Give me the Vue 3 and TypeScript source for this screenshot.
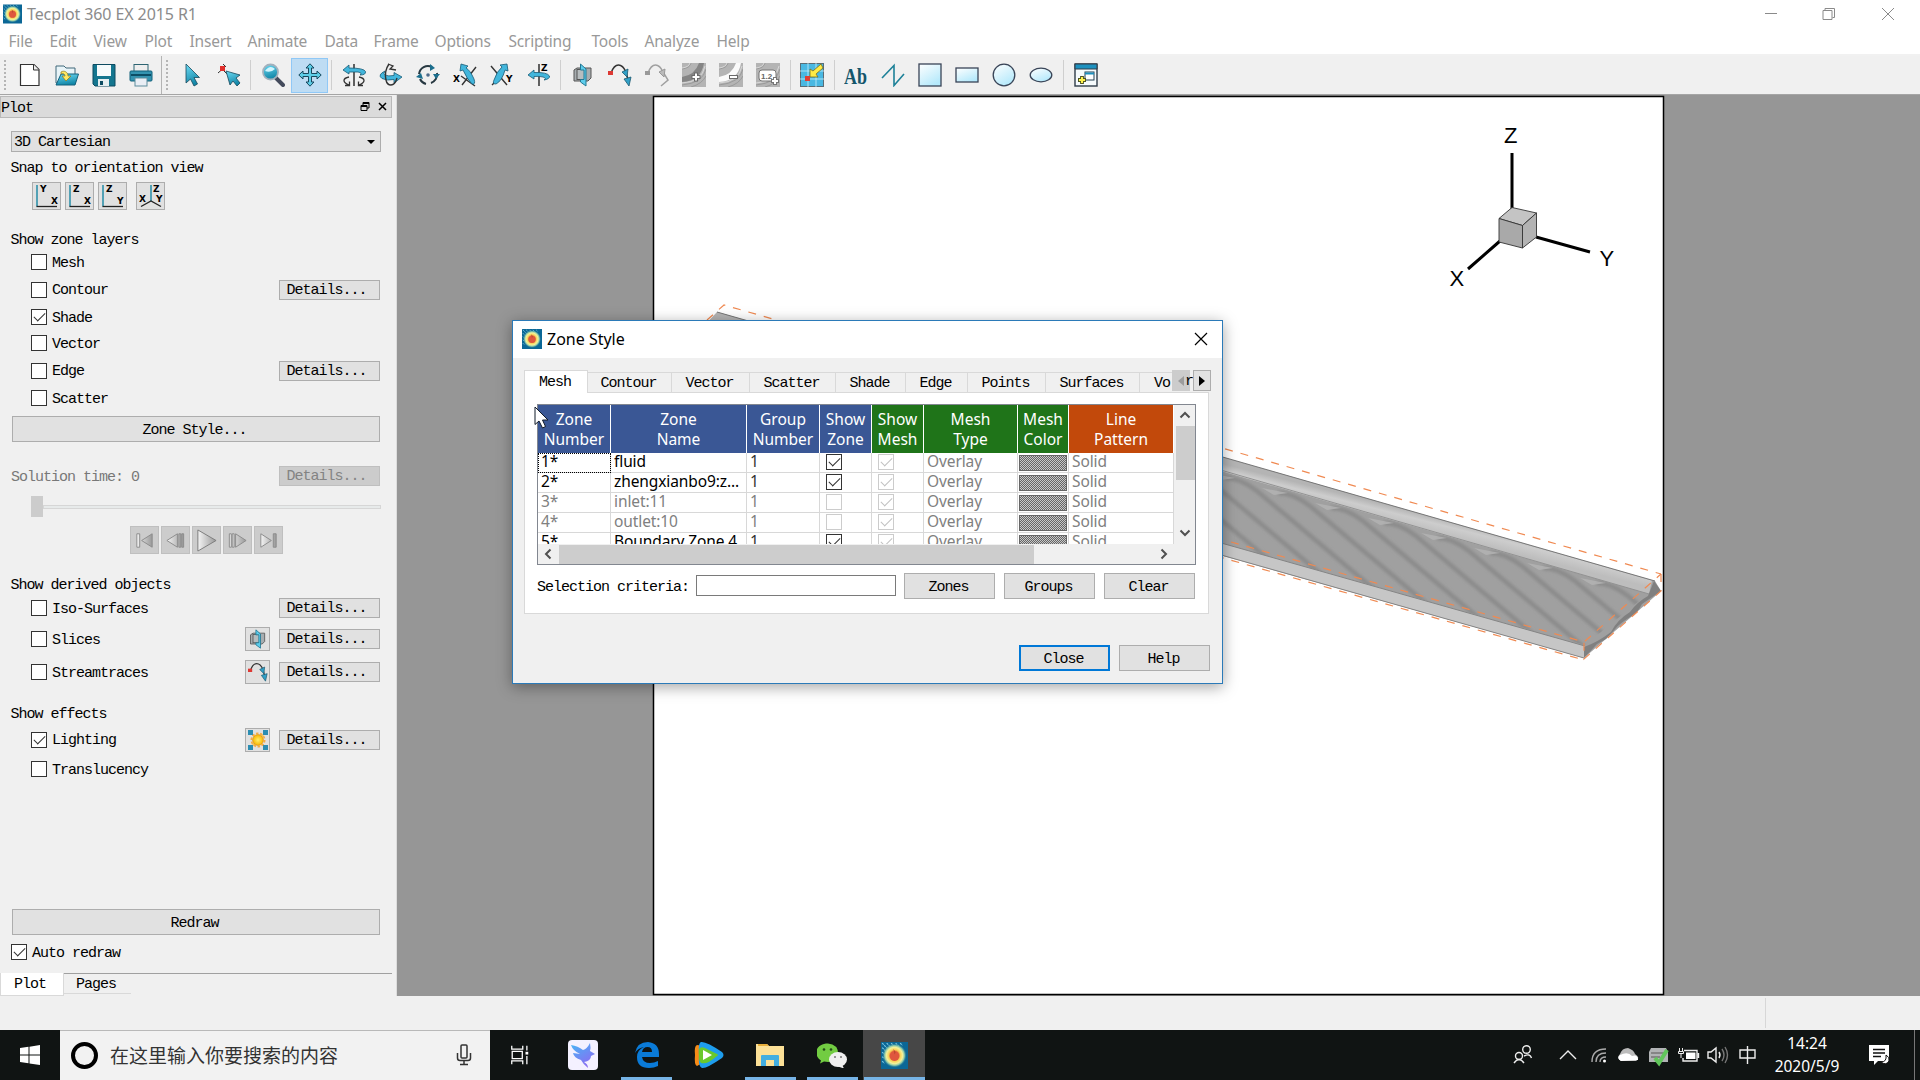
<script setup lang="ts">
interface MenuEntry { label: string; width: number }
interface Layer { label: string; on?: boolean; details?: boolean; icon?: string; h: number }
interface Zone { id: string; name: string; shown: boolean; dim: boolean }

const menus: MenuEntry[] = [
  { label: 'File', width: 41 }, { label: 'Edit', width: 44 }, { label: 'View', width: 51 },
  { label: 'Plot', width: 45 }, { label: 'Insert', width: 58 }, { label: 'Animate', width: 77 },
  { label: 'Data', width: 49 }, { label: 'Frame', width: 61 }, { label: 'Options', width: 74 },
  { label: 'Scripting', width: 83 }, { label: 'Tools', width: 53 }, { label: 'Analyze', width: 72 },
  { label: 'Help', width: 50 },
]

const toolGroups: string[][] = [
  ['new', 'open', 'save', 'print'],
  ['select', 'adjust'],
  ['zoom', 'move'],
  ['rot-s', 'rot-r', 'rot-t', 'rot-x', 'rot-y', 'rot-z'],
  ['slice', 'stream', 'stream-off', 'cont-add', 'cont-del', 'cont-label'],
  ['probe'],
  ['text', 'poly', 'square', 'rect', 'circle', 'ellipse'],
  ['frame'],
]

const zoneLayers: Layer[] = [
  { label: 'Mesh', h: 26 },
  { label: 'Contour', details: true, h: 29 },
  { label: 'Shade', on: true, h: 26 },
  { label: 'Vector', h: 26 },
  { label: 'Edge', details: true, h: 29 },
  { label: 'Scatter', h: 26 },
]
const derived: Layer[] = [
  { label: 'Iso-Surfaces', details: true, h: 28 },
  { label: 'Slices', details: true, icon: 'slice', h: 34 },
  { label: 'Streamtraces', details: true, icon: 'stream', h: 32 },
]
const effects: Layer[] = [
  { label: 'Lighting', on: true, details: true, icon: 'light', h: 33 },
  { label: 'Translucency', h: 26 },
]
const players = ['first', 'prev', 'play', 'next', 'last']
const views = ['v-yx', 'v-zx', 'v-zy', 'v-3d']

const tabs: MenuEntry[] = [
  { label: 'Contour', width: 84 }, { label: 'Vector', width: 78 }, { label: 'Scatter', width: 86 },
  { label: 'Shade', width: 70 }, { label: 'Edge', width: 62 }, { label: 'Points', width: 78 },
  { label: 'Surfaces', width: 94 },
]
const heads = [
  { a: 'Zone', b: 'Number', c: 'blue' }, { a: 'Zone', b: 'Name', c: 'blue' },
  { a: 'Group', b: 'Number', c: 'blue' }, { a: 'Show', b: 'Zone', c: 'blue' },
  { a: 'Show', b: 'Mesh', c: 'green' }, { a: 'Mesh', b: 'Type', c: 'green' },
  { a: 'Mesh', b: 'Color', c: 'green' }, { a: 'Line', b: 'Pattern', c: 'orange' },
]
const zones: Zone[] = [
  { id: '1*', name: 'fluid', shown: true, dim: false },
  { id: '2*', name: 'zhengxianbo9:z...', shown: true, dim: false },
  { id: '3*', name: 'inlet:11', shown: false, dim: true },
  { id: '4*', name: 'outlet:10', shown: false, dim: true },
  { id: '5*', name: 'Boundary Zone 4', shown: true, dim: false },
]
// Grooves run diagonally across the blade at an even pitch.
const ridges = Array.from({ length: 11 }, (_, i) => ({ x: 1088 + i * 53, y: 437 + i * 15 }))
</script>

<template>
  <div class="desktop">
    <svg class="defs" width="0" height="0">
      <defs>
        <linearGradient id="teal" x1="0" y1="0" x2="0.3" y2="1"><stop offset="0" stop-color="#6fdcf5" /><stop offset="1" stop-color="#1287a8" /></linearGradient>
        <linearGradient id="sky" x1="0" y1="0" x2="0.6" y2="1"><stop offset="0" stop-color="#fff" /><stop offset="1" stop-color="#b5e9fb" /></linearGradient>
        <linearGradient id="grey" x1="0" y1="0" x2="1" y2="0"><stop offset="0" stop-color="#f4f4f4" /><stop offset="1" stop-color="#999" /></linearGradient>
        <radialGradient id="burst"><stop offset="0" stop-color="#e0583c" /><stop offset=".34" stop-color="#e8703c" /><stop offset=".48" stop-color="#f9d45a" /><stop offset=".66" stop-color="#f3f09a" /><stop offset=".8" stop-color="#8cc9a8" /><stop offset="1" stop-color="#0b6796" stop-opacity="0" /></radialGradient>
        <radialGradient id="sun"><stop offset="0" stop-color="#fff06a" /><stop offset="1" stop-color="#f8b400" /></radialGradient>
        <linearGradient id="bird" x1="0" y1="0" x2=".6" y2="1"><stop offset="0" stop-color="#45b6f5" /><stop offset="1" stop-color="#8b6cf2" /></linearGradient>
        <symbol id="logo" viewBox="0 0 24 24"><rect width="24" height="24" fill="#0b6796" /><path d="M1 9L4 12M1 5L6 10M1 1L8 8M5 1L10 6M9 1L13 5M13 1L16 4M17 1L19 3M1 13L3 15M1 17L3 19" stroke="#7cc6e2" stroke-width="1" stroke-dasharray="2 .6" /><circle cx="12" cy="12" r="11" fill="url(#burst)" /><circle cx="12" cy="12.500" r="4.300" fill="#df563e" /><path d="M11 6l2 3-1 2z" fill="#b94830" /></symbol>
        <symbol id="new" viewBox="0 0 24 24"><path d="M2.500 1.500H16L21 6.500V22.500H2.500Z" fill="#fff" stroke="#333" stroke-width="1.200" /><path d="M15.500 1.500V7H21" fill="#eee" stroke="#333" /></symbol>
        <symbol id="open" viewBox="0 0 24 24"><path d="M1 3H9L11 5H20V20H1Z" fill="#e8f4f8" stroke="#40697a" /><path d="M1 22L6 11H23.500L20 22Z" fill="url(#teal)" stroke="#14607c" /><path d="M6 9c3-2 7 0 7 4h3l-5 5-4-5h3c0-2-2-3-4-2z" fill="#ffe964" stroke="#8a741a" stroke-width=".7" /></symbol>
        <symbol id="save" viewBox="0 0 24 24"><path d="M1 1.500H23V23H3L1 21Z" fill="#14768f" stroke="#0d4b61" /><rect x="5" y="2" width="14" height="11" fill="#f5fafb" /><rect x="6" y="16" width="11" height="7" fill="#e5eef0" /><rect x="8" y="18" width="3" height="4" fill="#0d4b61" /></symbol>
        <symbol id="print" viewBox="0 0 24 24"><rect x="5" y="1.500" width="14" height="8" fill="#eee" stroke="#2d6472" /><rect x="1" y="8" width="22" height="10" rx="1" fill="#3393b0" stroke="#11617b" /><path d="M2 12H22" stroke="#0c4d65" stroke-width="2" /><rect x="6" y="15" width="12" height="8" fill="#e9eef5" stroke="#5d8c9c" /></symbol>
        <symbol id="select" viewBox="0 0 24 24"><path d="M6 1V20L10.500 16L14 23L17.500 21L14 14.500H19.500Z" fill="url(#teal)" stroke="#16475a" stroke-width=".8" /></symbol>
        <symbol id="adjust" viewBox="0 0 24 24"><path d="M1 10L9 3M5 6L12 13M6 1L8 3" stroke="#333" /><rect x="3" y="3" width="5" height="5" fill="#e0302c" /><path d="M9 8L13 22L16 18L20 23L23 20L19 15L23 12Z" fill="url(#teal)" stroke="#16475a" stroke-width=".8" /></symbol>
        <symbol id="zoom" viewBox="0 0 24 24"><path d="M14 14L22 22" stroke="#444b5c" stroke-width="4" stroke-linecap="round" /><circle cx="9.500" cy="9" r="7.500" fill="url(#teal)" stroke="#a3b1bd" stroke-width="1.800" /><path d="M4 8q5-7 10-2q-4 4-10 2" fill="#d2f6ff" /></symbol>
        <symbol id="move" viewBox="0 0 24 24"><path d="M12 .8L16 5H13.500V10.500H19V8L23.200 12L19 16V13.500H13.500V19H16L12 23.200L8 19H10.500V13.500H5V16L.8 12L5 8V10.500H10.500V5H8Z" fill="#5ccde7" stroke="#17475c" stroke-width="1" /></symbol>
        <symbol id="rot-s" viewBox="0 0 24 24"><path d="M12 1V23" stroke="#222" stroke-width="1.400" /><path d="M7 2L1 7L7 11V9H16Q21 10 18 12Q24 12 23.500 8.500Q22 5 7 5Z" fill="#42b6dc" stroke="#195b75" stroke-width=".8" /><path d="M7 14Q2 15 2 17.500T7 22M3 22.500H7.500V18.500M17 14Q22 15 22 17.500T17 22M21 22.500H16.500V18.500" fill="none" stroke="#333" stroke-width="1.300" /></symbol>
        <symbol id="rot-r" viewBox="0 0 24 24"><path d="M6 8Q-2 12 3 15.500Q8 18 15 16.500V20L23 14L15 9.500V12.500Q9 13.500 6 12Q4 11 6 8Z" fill="#42b6dc" stroke="#195b75" stroke-width=".8" /><path d="M10 1Q5 8 7 17Q8 22 12 22Q16 22 18 15" fill="none" stroke="#333" stroke-width="1.400" /><path d="M9 1L14 3L11 6L17 7" fill="none" stroke="#333" stroke-width="1.300" /></symbol>
        <symbol id="rot-t" viewBox="0 0 24 24"><path d="M3 11A9 9 0 0 1 16 4M21 10A9 9 0 0 1 15 20M10 21A9 9 0 0 1 4 16" fill="none" stroke="#273841" stroke-width="2" /><path d="M14 1L19 5L14 8ZM24 11L20 16L17 11ZM0 14L5 10L7 16Z" fill="#1b6e8d" /><circle cx="12" cy="12" r="1.800" fill="#4d6a8b" /></symbol>
        <symbol id="rot-x" viewBox="0 0 24 24"><path d="M9 22L23 4M8 13L22 23" stroke="#333" stroke-width="1.400" /><path d="M8 1L7 8L10 7Q14 16 19 21Q23 22 21 16Q17 7 13 5L15 3Z" fill="#42b6dc" stroke="#195b75" stroke-width=".8" /><text x="0" y="19" class="axis">X</text></symbol>
        <symbol id="rot-y" viewBox="0 0 24 24"><path d="M1 3L17 22M2 22L12 12" stroke="#333" stroke-width="1.400" /><path d="M17 1L18 8L15 7Q12 18 6 21Q2 21 4 17Q7 8 12 4L10 2Z" fill="#42b6dc" stroke="#195b75" stroke-width=".8" /><text x="16" y="19" class="axis">Y</text></symbol>
        <symbol id="rot-z" viewBox="0 0 24 24"><path d="M12 1V23" stroke="#222" stroke-width="1.400" /><path d="M7 7L1 12L7 16V13.500Q12 13 16 14Q20 15 17 17Q23 16 22.500 13Q20 9 7 9.500Z" fill="#42b6dc" stroke="#195b75" stroke-width=".8" /><text x="14" y="8" class="axis">Z</text></symbol>
        <symbol id="slice" viewBox="0 0 24 24"><path d="M3 7L6 5H20V15L17 18H3Z" fill="#a7adb0" stroke="#555" /><rect x="6" y="6.500" width="8" height="10" fill="#b7bdbf" stroke="#555" /><path d="M9.500 1L15 6V23L9.500 19V16.500H13V7H9.500Z" fill="#5dcdec" stroke="#237894" /></symbol>
        <symbol id="stream" viewBox="0 0 24 24"><path d="M3 10C7-1 14 0 18 9L20 17" fill="none" stroke="#333" stroke-width="1.500" /><rect x="0" y="8" width="5" height="4" fill="#dd3934" /><path d="M14 9L20 6L19 14ZM16 16L23 14L21 23Z" fill="#31a0c7" stroke="#1a5870" stroke-width=".8" /></symbol>
        <symbol id="stream-off" viewBox="0 0 24 24"><path d="M3 10C7-1 14 0 18 9L23 17L16 23" fill="none" stroke="#a0a0a0" stroke-width="1.500" /><rect x="0" y="8" width="5" height="4" fill="#999" /><path d="M14 9L20 6L19 14Z" fill="#bbb" stroke="#999" /></symbol>
        <symbol id="cont-base" viewBox="0 0 24 24"><rect width="24" height="24" fill="#b4b4b4" /><path d="M0 6Q8 5 9 0M0 22Q21 20 24 6M9 24Q20 21 24 13" fill="none" stroke="#9a9a9a" stroke-width="1" /><path d="M0 5Q7 4 8 0M0 20Q20 19 23 3" fill="none" stroke="#d8d8d8" stroke-width="1" /></symbol>
        <symbol id="cont-add" viewBox="0 0 24 24"><use href="#cont-base" /><path d="M0 14Q13 12 17 0H22Q19 18 0 19Z" fill="#858585" /><path d="M14 9.500v9M9.500 14h9" stroke="#6a6a6a" stroke-width="4" /><path d="M14 10.500v7M10.500 14h7" stroke="#fff" stroke-width="2" /></symbol>
        <symbol id="cont-del" viewBox="0 0 24 24"><use href="#cont-base" /><path d="M0 14Q13 12 17 0H22Q19 18 0 19Z" fill="#fafafa" /><path d="M10 14h9" stroke="#6a6a6a" stroke-width="4" /><path d="M11 14h7" stroke="#fff" stroke-width="2" /></symbol>
        <symbol id="cont-label" viewBox="0 0 24 24"><use href="#cont-base" /><rect x="3" y="7" width="17" height="11" rx="3" fill="#fff" stroke="#777" /><text x="5" y="15.500" class="tiny">1.2</text><path d="M19 14v8M15 18h8" stroke="#777" stroke-width="4" /><path d="M19 15v6M16 18h6" stroke="#fff" stroke-width="2" /></symbol>
        <symbol id="probe" viewBox="0 0 24 24"><rect x=".5" y=".5" width="23" height="23" fill="#49b8e2" stroke="#5b6d76" /><path d="M8 0V24M16 0V24M0 8H24M0 16H24" stroke="#c6eefc" stroke-width=".8" /><path d="M21 1L23 5L16 11L18 14H10V6L13 8Z" fill="#ffeb45" stroke="#77691c" stroke-width=".8" /><rect x="5" y="13" width="5" height="5" fill="#e13d32" /></symbol>
        <symbol id="text" viewBox="0 0 24 24"><text x="0" y="20.500" class="glyph" textLength="23" lengthAdjust="spacingAndGlyphs">Ab</text></symbol>
        <symbol id="poly" viewBox="0 0 24 24"><path d="M1 15L13 2.500V22.500L23 11" fill="none" stroke="#1d8198" stroke-width="1.600" /></symbol>
        <symbol id="square" viewBox="0 0 24 24"><rect x="1" y="1" width="22" height="22" fill="url(#sky)" stroke="#394457" stroke-width="1.300" /></symbol>
        <symbol id="rect" viewBox="0 0 24 24"><rect x="1" y="5" width="22" height="14" fill="url(#sky)" stroke="#394457" stroke-width="1.300" /></symbol>
        <symbol id="circle" viewBox="0 0 24 24"><circle cx="12" cy="12" r="10.800" fill="url(#sky)" stroke="#394457" stroke-width="1.300" /></symbol>
        <symbol id="ellipse" viewBox="0 0 24 24"><ellipse cx="12" cy="12" rx="10.800" ry="6.800" fill="url(#sky)" stroke="#394457" stroke-width="1.300" /></symbol>
        <symbol id="frame" viewBox="0 0 24 24"><rect x="1" y="1" width="22" height="22" fill="#f6fbfd" stroke="#303c49" stroke-width="1.400" /><path d="M1 1H23V6H1Z" fill="#1d91bf" stroke="#303c49" /><rect x="11" y="9" width="9" height="8" fill="#fff" stroke="#233e50" /><path d="M11 10.500H20" stroke="#1c8fbc" stroke-width="2" /><path d="M8 13v8M4 17h8" stroke="#4f5523" stroke-width="3.800" /><path d="M8 14v6M5 17h6" stroke="#fff24c" stroke-width="2" /></symbol>
        <symbol id="light" viewBox="0 0 24 24"><path d="M3 3L21 21M21 3L3 21" stroke="#f4c75a" stroke-width="2" /><circle cx="12" cy="12" r="8" fill="none" stroke="#f7ab42" stroke-width="2" stroke-dasharray="3 2" /><circle cx="12" cy="12" r="6.500" fill="url(#sun)" stroke="#d68a12" stroke-width=".7" /><path d="M0 0h6v6H0zM18 0h6v6h-6zM0 18h6v6H0zM18 18h6v6h-6z" fill="#2c8db2" /></symbol>
        <symbol id="v-yx" viewBox="0 0 24 24"><path d="M2 1V22.500" stroke="#238ba6" stroke-width="1.500" /><path d="M1.500 22.500H22" stroke="#222" stroke-width="1.300" /><text x="5" y="8" class="axis">Y</text><text x="16" y="20" class="axis">X</text></symbol>
        <symbol id="v-zx" viewBox="0 0 24 24"><path d="M2 1V22.500" stroke="#238ba6" stroke-width="1.500" /><path d="M1.500 22.500H22" stroke="#222" stroke-width="1.300" /><text x="5" y="8" class="axis">Z</text><text x="16" y="20" class="axis">X</text></symbol>
        <symbol id="v-zy" viewBox="0 0 24 24"><path d="M2 1V22.500" stroke="#238ba6" stroke-width="1.500" /><path d="M1.500 22.500H22" stroke="#222" stroke-width="1.300" /><text x="5" y="8" class="axis">Z</text><text x="16" y="20" class="axis">Y</text></symbol>
        <symbol id="v-3d" viewBox="0 0 24 24"><path d="M12 1V17" stroke="#238ba6" stroke-width="1.500" /><path d="M2 22.500L12 17L22 22.500" fill="none" stroke="#222" stroke-width="1.400" /><text x="14" y="8" class="axis">Z</text><text x="0" y="18" class="axis">X</text><text x="17" y="18" class="axis">Y</text></symbol>
        <symbol id="first" viewBox="0 0 24 24"><path d="M4 5H7V19H4ZM20 5V19L9 12Z" fill="url(#grey)" stroke="#8b8b8b" /></symbol>
        <symbol id="prev" viewBox="0 0 24 24"><path d="M3 12L14 5V19ZM15.500 5H17.500V19H15.500ZM18.500 5H20.500V19H18.500Z" fill="url(#grey)" stroke="#8b8b8b" /></symbol>
        <symbol id="play" viewBox="0 0 24 24"><path d="M3 1L22 12L3 23Z" fill="url(#grey)" stroke="#7b7b7b" /></symbol>
        <symbol id="next" viewBox="0 0 24 24"><path d="M21 12L10 5V19ZM3.500 5H5.500V19H3.500ZM6.500 5H8.500V19H6.500Z" fill="url(#grey)" stroke="#8b8b8b" /></symbol>
        <symbol id="last" viewBox="0 0 24 24"><path d="M20 5H17V19H20ZM4 5V19L15 12Z" fill="url(#grey)" stroke="#8b8b8b" /></symbol>
      </defs>
    </svg>

    <header class="titlebar">
      <svg class="logo"><use href="#logo" /></svg>
      <span class="title">Tecplot 360 EX 2015 R1</span>
      <svg class="winbtns" viewBox="0 0 150 28" fill="none" stroke="#8a8a8a"><path d="M5 13.500H17M63 10.500H72V19.500H63ZM65 10V8.500H74.500V17.500H72.500M122 8L134 20M134 8L122 20" /></svg>
    </header>
    <nav class="menubar">
      <span v-for="m in menus" :key="m.label" :style="{ width: m.width + 'px' }">{{ m.label }}</span>
    </nav>
    <div class="toolbar">
      <template v-for="(g, gi) in toolGroups" :key="gi">
        <i v-if="gi < 2" class="grip" :class="{ second: gi === 1 }"></i>
        <i v-else class="sep"></i>
        <span v-for="t in g" :key="t" class="tool" :class="{ active: t === 'move' }"><svg><use :href="'#' + t" /></svg></span>
      </template>
    </div>

    <div class="workspace">
      <aside class="panel sim">
        <div class="panel-head"><span>Plot</span>
          <svg viewBox="0 0 28 12" fill="none" stroke="#000"><path d="M1 4.500H7V9.500H1ZM1 5.500H7M3 4V1.500H9V7H7M3 2.500H9" /><path d="M19 2L26 9M26 2L19 9" stroke-width="1.500" /></svg>
        </div>
        <div class="combo"><span>3D Cartesian</span><i></i></div>
        <div class="label snap">Snap to orientation view</div>
        <div class="views"><span v-for="v in views" :key="v" class="ibtn"><svg><use :href="'#' + v" /></svg></span></div>
        <div class="label layers">Show zone layers</div>
        <div v-for="r in zoneLayers" :key="r.label" class="row" :style="{ height: r.h + 'px' }">
          <i class="cb" :class="{ on: r.on }"></i><span class="name">{{ r.label }}</span>
          <span v-if="r.details" class="btn det">Details...</span>
        </div>
        <div class="btn wide zs">Zone Style...</div>
        <div class="soltime"><span>Solution time: 0</span><span class="btn det off">Details...</span></div>
        <div class="slider"><i></i><b></b></div>
        <div class="players"><span v-for="p in players" :key="p" class="ibtn off"><svg><use :href="'#' + p" /></svg></span></div>
        <div class="label dob">Show derived objects</div>
        <div v-for="r in derived" :key="r.label" class="row" :style="{ height: r.h + 'px' }">
          <i class="cb" :class="{ on: r.on }"></i><span class="name">{{ r.label }}</span>
          <span v-if="r.icon" class="sbtn"><svg><use :href="'#' + r.icon" /></svg></span>
          <span v-if="r.details" class="btn det">Details...</span>
        </div>
        <div class="label eff">Show effects</div>
        <div v-for="r in effects" :key="r.label" class="row" :style="{ height: r.h + 'px' }">
          <i class="cb" :class="{ on: r.on }"></i><span class="name">{{ r.label }}</span>
          <span v-if="r.icon" class="sbtn"><svg><use :href="'#' + r.icon" /></svg></span>
          <span v-if="r.details" class="btn det">Details...</span>
        </div>
        <div class="btn wide redraw">Redraw</div>
        <div class="row auto"><i class="cb on"></i><span class="name">Auto redraw</span></div>
        <div class="side-tabs"><span class="cur">Plot</span><span class="pages">Pages</span><i></i></div>
      </aside>
      <svg class="canvas" viewBox="397 95 1523 901">
        <defs>
          <linearGradient id="band" gradientUnits="userSpaceOnUse" x1="1400" y1="508" x2="1396" y2="524"><stop offset="0" stop-color="#b4b4b4" /><stop offset=".4" stop-color="#cdcdcd" /><stop offset="1" stop-color="#bdbdbd" /></linearGradient>
          <clipPath id="body"><path d="M1200 463L1649 593L1585 645L1200 537Z" /></clipPath>
          <filter id="soft"><feGaussianBlur stdDeviation="1.800" /></filter>
        </defs>
        <rect x="397" y="95" width="1523" height="901" fill="#969696" />
        <rect x="653.500" y="96.500" width="1010" height="898" fill="#fff" stroke="#000" stroke-width="1.500" />
        <path d="M717 312L1655 581L1661 591L1584 658L700 408Z" fill="#a0a0a0" />
        <g clip-path="url(#body)">
          <path v-for="(r, i) in ridges" :key="i" :d="`M${r.x - 22} ${r.y - 4}Q${r.x - 6} ${r.y - 4} ${r.x + 10} ${r.y + 9}L${r.x + 128} ${r.y + 108}`" fill="none" stroke="#8b8b8b" stroke-width="4.500" filter="url(#soft)" />
          <path v-for="(r, i) in ridges" :key="'h' + i" :d="`M${r.x - 38} ${r.y - 9}l12 7l14 -2z`" fill="#b4b4b4" opacity=".8" />
        </g>
        <path d="M717 312L1652 580.500L1649 594L1200 465L700 330Z" fill="url(#band)" />
        <path d="M717 312L1655 581" stroke="#777" fill="none" />
        <path d="M1200 464L1649 594" stroke="#929292" fill="none" />
        <path d="M1200 537L1585 646L1584 658L1200 549Z" fill="#c6c6c6" />
        <path d="M1200 537L1585 646M1200 549L1584 658" stroke="#858585" fill="none" />
        <path d="M1654 581L1661 591L1642 604Q1637 614 1630 617Q1619 624 1616 628Q1611 634 1606 639L1597 644L1584 658V647Q1598 642 1611 632Q1617 620 1630 612Q1637 602 1648 596Z" fill="#808080" />
        <g fill="none" stroke="#f08a52" stroke-width="1.200" stroke-dasharray="8 8">
          <path d="M707 320L724 305L1661 574" /><path d="M1216 556L1584 660" /><path d="M1231 542L1584 642L1661 574" /><path d="M1661 574V591L1584 659V642" />
        </g>
        <path d="M1512 153V209M1500 241L1468 269M1536 237L1590 252" stroke="#000" stroke-width="3" />
        <g stroke="#333" stroke-width=".9"><path d="M1512 207.500L1536.500 213L1522.500 225.500L1499 218.500Z" fill="#c4c4c4" /><path d="M1499 218.500L1522.500 225.500V248L1499 242Z" fill="#a9a9a9" /><path d="M1522.500 225.500L1536.500 213V237L1522.500 248Z" fill="#b3b3b3" /></g>
        <g class="axes"><text x="1504" y="143">Z</text><text x="1449.500" y="286">X</text><text x="1599.500" y="266">Y</text></g>
      </svg>
    </div>
    <div class="statusbar"><i></i></div>

    <footer class="taskbar">
      <div class="start"><svg viewBox="0 0 20 20" fill="#fff"><path d="M0 3L8.500 1.800V9.500H0ZM9.500 1.700L20 0V9.500H9.500ZM0 10.500H8.500V18.200L0 17ZM9.500 10.500H20V20L9.500 18.400Z" /></svg></div>
      <div class="search"><i></i><span>在这里输入你要搜索的内容</span>
        <svg viewBox="0 0 16 22" fill="none" stroke="#333" stroke-width="1.500"><rect x="5" y="1" width="6" height="13" rx="1" /><path d="M1.500 9V14Q1.500 16.500 4 16.500H12Q14.500 16.500 14.500 14V9M8 17V20M4 20.500H12" /></svg>
      </div>
      <div class="task tv"><svg viewBox="0 0 24 24" fill="none" stroke="#fff" stroke-width="1.400"><path d="M3 2V5.500H15V2M3 22V18.500H15V22M3.500 8H14.500V16H3.500ZM19.500 2V7M19.500 13V22" /><path d="M18 10H21" stroke-width="3" /></svg></div>
      <div class="task bird"><svg viewBox="0 0 30 30"><rect width="30" height="30" rx="4" fill="#f4f1ff" /><path d="M3 5Q10 6 15 10Q19 9 22 3Q23 8 22 11L27 14L23 16Q23 21 16 22Q20 24 20 28Q15 24 13 20Q6 18 5 13L12 14Q5 11 3 5Z" fill="url(#bird)" /></svg></div>
      <div class="task run edge"><svg viewBox="0 0 26 28"><path d="M1 12Q3 1 14 1Q25 2 25 13V16H8Q9 22 16 22Q20 22 24 20V25Q20 27 15 27Q3 27 3 16Q3 9 10 6Q4 7 1 12ZM8 11H18Q18 6 13.500 6Q9 6 8 11Z" fill="#0a7bd8" /></svg></div>
      <div class="task tencent"><svg viewBox="0 0 30 28"><path d="M3 4Q0 5 1 14Q0 24 3 25L10 21V5Z" fill="#f78b16" /><path d="M7 1Q4 2 5 14Q4 26 8 27Q12 28 28 17Q31 14 28 11Q12 0 7 1Z" fill="#1e9ded" /><path d="M5 8Q7 5 11 7L23 13Q25 14 23 15Q13 24 7 22Q4 20 5 8Z" fill="#6ac92d" /><path d="M9 9L18 14L9 19Z" fill="#fff" /></svg></div>
      <div class="task run multi"><svg viewBox="0 0 28 24"><path d="M0 1H11L13 3H28V23H0Z" fill="#fce197" /><path d="M2 1H11L13 3H2Z" fill="#e7ae3b" /><path d="M5 23V13Q5 12 6 12H22Q23 12 23 13V23H18V17H10V23Z" fill="#42aee0" /></svg></div>
      <div class="task run wechat"><svg viewBox="0 0 30 24"><path d="M11 0C-2 0-4 12 4 17L3 20L7 18Q18 20 21 12Q22 1 11 0Z" fill="#72cc42" /><ellipse cx="21" cy="16" rx="9" ry="7.500" fill="#f0f0f0" /><path d="M25 21L27 25L21 23Z" fill="#f0f0f0" /><g fill="#234a18"><circle cx="7" cy="6" r="1.300" /><circle cx="14" cy="6" r="1.300" /></g><g fill="#777"><circle cx="18" cy="13.500" r="1" /><circle cx="24" cy="13.500" r="1" /></g></svg></div>
      <div class="task run tec"><svg><use href="#logo" /></svg></div>
      <svg class="tray" viewBox="1500 1030 270 50" fill="none" stroke="#eee" stroke-width="1.400">
        <circle cx="1526.500" cy="1049.500" r="3.800" /><circle cx="1519" cy="1056" r="3.500" /><path d="M1514 1063Q1519 1056 1524 1063M1524 1056Q1530 1053 1531.500 1058" />
        <path d="M1560 1059L1568 1051L1576 1059" />
        <g stroke="#aaa"><path d="M1592 1062Q1592 1049 1606 1049M1596 1062Q1596 1053 1606 1053M1600 1062Q1600 1057 1606 1057" /></g><circle cx="1604.500" cy="1061" r="1.500" fill="#fff" stroke="none" />
        <path d="M1621 1061Q1616 1058 1620 1054Q1622 1048 1628 1048Q1634 1050 1635 1054Q1641 1058 1636 1061Z" fill="#bbb" stroke="none" /><path d="M1621 1061Q1616 1058 1620 1055Q1628 1051 1632 1056Q1638 1054 1638 1060Z" fill="#fff" stroke="none" />
        <path d="M1651 1048H1666L1668 1052V1062H1649V1052Z" fill="#b1b3b5" stroke="none" /><path d="M1651 1053H1664M1651 1057H1660" stroke="#777" /><path d="M1655 1058L1659 1063L1667 1050" stroke="#61c65b" stroke-width="4" />
        <path d="M1684 1050.500H1697V1061H1683V1058M1698.500 1053V1058" /><path d="M1679.500 1048V1051M1682.500 1048V1051M1678.500 1051.500H1683.500V1053.500H1678.500ZM1681 1054V1058" stroke-width="1" /><rect x="1686" y="1052.500" width="9.500" height="6.500" fill="#fff" stroke="none" />
        <path d="M1708 1052H1711L1716 1048V1062L1711 1058H1708ZM1719 1052Q1721 1055 1719 1058" /><path d="M1722 1049Q1726 1055 1722 1061M1725 1047Q1730 1055 1725 1063" stroke="#777" />
        <path d="M1740 1050H1755V1058H1740ZM1747.500 1046V1064" />
      </svg>
      <div class="clock"><span>14:24</span><span>2020/5/9</span></div>
      <svg class="note" viewBox="0 0 20 20"><path d="M0 0H20V16H9L5 20V16H0Z" fill="#fff" /><path d="M4 4.500H16M4 8H16M4 11.500H12" stroke="#111" stroke-width="1.300" /><path d="M17 10Q18 17 12 17Q17 21 20 16Q21 12 17 10Z" fill="#fff" stroke="#111" /></svg>
      <i class="peek"></i>
    </footer>

    <section class="dialog">
      <div class="dlg-title"><svg class="logo"><use href="#logo" /></svg><span>Zone Style</span><svg class="x" viewBox="0 0 14 14" stroke="#000" stroke-width="1.200"><path d="M1 1L13 13M13 1L1 13" /></svg></div>
      <div class="tabs sim">
        <span class="tab cur">Mesh</span>
        <span v-for="t in tabs" :key="t.label" class="tab" :style="{ width: t.width + 'px' }">{{ t.label }}</span>
        <span class="tab vol">Vo</span>
        <span class="scr off"><i class="l"></i></span><span class="gap">r</span><span class="scr"><i class="r"></i></span>
      </div>
      <div class="page">
        <div class="table">
          <div class="grid">
            <div v-for="(h, i) in heads" :key="i" class="th" :class="h.c"><span>{{ h.a }}</span><span>{{ h.b }}</span></div>
            <template v-for="(z, i) in zones" :key="z.id">
              <div class="td" :class="{ dim: z.dim, focus: i === 0 }">{{ z.id }}</div>
              <div class="td" :class="{ dim: z.dim }">{{ z.name }}</div>
              <div class="td" :class="{ dim: z.dim, semi: !z.dim }">1</div>
              <div class="td chk"><i class="cb" :class="{ on: z.shown, off: z.dim }"></i></div>
              <div class="td chk"><i class="cb on off"></i></div>
              <div class="td dim">Overlay</div>
              <div class="td col"><i></i></div>
              <div class="td dim">Solid</div>
            </template>
          </div>
          <div class="vs">
            <svg viewBox="0 0 12 8"><path d="M1.500 6.500L6 2L10.500 6.500" /></svg><i></i><svg viewBox="0 0 12 8"><path d="M1.500 1.500L6 6L10.500 1.500" /></svg>
          </div>
          <div class="hs">
            <svg viewBox="0 0 8 12"><path d="M6.500 1.500L2 6L6.500 10.500" /></svg><i></i><svg viewBox="0 0 8 12"><path d="M1.500 1.500L6 6L1.500 10.500" /></svg>
          </div>
        </div>
        <div class="criteria sim"><span>Selection criteria:</span><i></i><b class="btn">Zones</b><b class="btn">Groups</b><b class="btn">Clear</b></div>
      </div>
      <div class="actions sim"><b class="btn def">Close</b><b class="btn">Help</b></div>
      <svg class="cursor" viewBox="0 0 16 24"><path d="M1 1V18.500L5 15L8.500 22L11.500 20.500L8.500 14H14Z" fill="#fff" stroke="#111a28" /></svg>
    </section>
  </div>
</template>

<style>
body { overflow: hidden; background: #f0f0f0; }
</style>
<style scoped>
* { box-sizing: border-box; }
.desktop { position: relative; width: 1920px; height: 1080px; display: flex; flex-direction: column; background: #f0f0f0; font: 15.5px/20px 'Noto Sans', 'Noto Sans CJK SC', sans-serif; color: #111; overflow: hidden; white-space: nowrap; }
svg { display: block; flex: none; }
.defs { position: absolute; }
.axis { font: bold 9px 'DejaVu Sans', sans-serif; fill: #000; stroke: none; }
.tiny { font: bold 8px 'Liberation Sans', sans-serif; fill: #666; }
.glyph { font: bold 23px 'Liberation Serif', serif; fill: #14566b; }
.sim { font: 15px/20px 'Liberation Mono', monospace; letter-spacing: -1px; color: #000; }

.titlebar { height: 28px; background: #fff; display: flex; align-items: center; padding: 0 10px 0 3px; color: #8b8b8b; }
.titlebar .logo { width: 19px; height: 20px; }
.title { margin-left: 5px; font-size: 16px; letter-spacing: -.1px; flex: 1; }
.winbtns { width: 150px; height: 28px; }
.menubar { height: 28px; background: #fff; display: flex; align-items: center; padding: 0 0 1px 8.500px; border-bottom: 2px solid #f1f1f1; color: #999; letter-spacing: -.2px; }
.menubar span { flex: none; }
.toolbar { height: 39px; display: flex; align-items: center; border-bottom: 1px solid #a5a5a5; }
.grip { width: 2px; height: 30px; margin: 0 5px 0 4px; background: repeating-linear-gradient(#b5b5b5 0 2px, transparent 2px 4px); }
.grip.second { width: 8px; height: 38px; margin: 0 4px 0 2px; border-left: 1px solid #b4b4b4; background: repeating-linear-gradient(#b5b5b5 0 2px, transparent 2px 4px) 4px 4px / 2px 30px no-repeat; }
.sep { width: 7.200px; height: 30px; background: linear-gradient(#cfcfcf, #cfcfcf) 3px 0 / 1px 30px no-repeat; }
.tool { width: 37px; height: 35px; display: grid; place-items: center; }
.tool svg { width: 24px; height: 24px; }
.tool.active { background: #bedcf3; border: 1px solid #90c8f6; }

.workspace { height: 901px; display: flex; }
.panel { width: 397px; display: flex; flex-direction: column; border-right: 1px solid #ddd; }
.panel > * { flex: none; }
.panel-head { margin-top: 1px; height: 22px; width: 392px; background: #dbdbdb; border: 1px solid #b9b9b9; display: flex; justify-content: space-between; align-items: center; padding: 0 3px 0 0; }
.panel-head span { padding-top: 4px; }
.panel-head svg { width: 28px; height: 12px; }
.combo { margin: 13px 0 0 11px; width: 370px; height: 21px; border: 1px solid #adadad; background: #e1e1e1; display: flex; align-items: center; justify-content: space-between; padding: 0 5px 0 2px; }
.combo span { padding-top: 3px; }
.combo i { border: 4px solid transparent; border-top-color: #000; border-bottom: 0; }
.label { margin-left: 10.500px; height: 20px; padding-top: 2px; }
.snap { margin-top: 5px; } .layers { margin-top: 19px; } .dob { margin-top: 20px; } .eff { margin-top: 15px; }
.views { margin: 5px 0 0 32px; display: flex; gap: 4px; }
.views .ibtn:last-child { margin-left: 5px; }
.ibtn { width: 29px; height: 28px; border: 1px solid #adadad; background: #e1e1e1; display: grid; place-items: center; }
.ibtn svg { width: 24px; height: 24px; }
.players .ibtn svg { width: 23px; height: 23px; }
.ibtn.off { background: #cccccc; border-color: #bfbfbf; }
.row { display: flex; align-items: center; padding: 0 16px 0 31px; }
.row .name { margin-left: 5px; padding-top: 3px; flex: 1; }
.cb { width: 16px; height: 16px; flex: none; border: 1px solid #333; background: #fff; display: grid; place-items: center; }
.cb.on::after { content: ''; width: 10px; height: 5px; border: solid #333; border-width: 0 0 1.500px 1.500px; transform: translate(0, -1.500px) rotate(-45deg); }
.cb.off { border-color: #ccc; }
.cb.off::after { border-color: #c2c2c2; }
.btn { display: flex; align-items: center; justify-content: center; background: #e1e1e1; border: 1px solid #adadad; font-weight: normal; padding-top: 3px; }
.det { width: 101px; height: 20px; padding-right: 6px; padding-top: 2px; }
.btn.off { background: #ccc; border-color: #bfbfbf; color: #838383; }
.wide { width: 368px; height: 26px; margin-left: 12px; padding-right: 3px; }
.zs { margin-top: 5px; }
.soltime { margin-top: 24px; height: 20px; display: flex; justify-content: space-between; padding: 0 16px 0 11px; color: #787878; }
.soltime > span:first-child { padding-top: 2px; }
.slider { margin: 10px 0 0 31px; width: 350px; height: 21px; display: flex; align-items: center; }
.slider i { width: 12px; height: 21px; background: #ccc; }
.slider b { flex: 1; height: 4px; border: 1px solid #d6d6d6; background: #e7eaea; }
.players { margin: 9px 0 0 130px; display: flex; gap: 2px; }
.sbtn { width: 25px; height: 24px; margin-right: 9px; border: 1px solid #adadad; background: #e1e1e1; display: grid; place-items: center; }
.sbtn svg { width: 20px; height: 20px; }
.redraw { margin-top: 127px; }
.auto { margin-top: 4px; height: 26px; padding-left: 11px; }
.side-tabs { margin-top: 8px; height: 23px; width: 392px; display: flex; }
.side-tabs .cur { width: 64px; background: #fff; border: 1px solid #d9d9d9; border-top: 0; padding: 3px 0 0 13px; line-height: 18px; }
.side-tabs .pages { width: 67px; height: 21px; border-top: 1px solid #a0a0a0; border-bottom: 1px solid #d9d9d9; padding: 2px 0 0 12px; line-height: 18px; }
.side-tabs i { flex: 1; border-top: 1px solid #a0a0a0; }
.canvas { width: 1523px; height: 901px; }
.axes { font: 22px 'Liberation Sans', sans-serif; fill: #000; }
.statusbar { height: 34px; padding: 2px 0 0 1765px; }
.statusbar i { display: block; height: 30px; border-left: 1px solid #d7d7d7; }

.taskbar { height: 50px; background: #101413; display: flex; color: #fff; }
.start { width: 60px; display: grid; place-items: center; }
.start svg { width: 20px; height: 20px; }
.search { width: 430px; background: #f2f2f2; border-top: 1px solid #b9b9b9; display: flex; align-items: center; padding: 0 18px 2px 11px; color: #333; font: 19px/24px 'Noto Sans CJK SC', sans-serif; }
.search i { width: 27px; height: 27px; border: 4px solid #000; border-radius: 50%; margin: 1px 12px 0 0; }
.search span { flex: 1; }
.search svg { width: 16px; height: 22px; }
.task { width: 61.800px; height: 50px; display: grid; place-items: center; background: linear-gradient(#76b4e6, #76b4e6) center bottom / 51px 3px no-repeat; }
.task:not(.run) { background: none; }
.tv svg { width: 24px; height: 22px; }
.tv { width: 60px; } .bird { width: 66px; }
.bird svg { width: 30px; height: 30px; }
.edge svg { width: 26px; height: 28px; }
.tencent svg { width: 30px; height: 28px; }
.multi svg { width: 28px; height: 24px; }
.wechat svg { width: 30px; height: 25px; }
.tec { background: linear-gradient(#76b4e6, #76b4e6) center bottom / 61px 3px no-repeat, #474747; }
.tec svg { width: 27px; height: 27px; }
.tray { width: 270px; height: 50px; margin-left: auto; }
.clock { width: 74px; display: flex; flex-direction: column; align-items: center; line-height: 23px; padding-top: 2px; }
.note { width: 20px; height: 20px; margin: 15px 25px 0 25px; }
.peek { width: 6px; border-left: 1px solid #777; }

.dialog { position: absolute; left: 512px; top: 320px; width: 711px; height: 364px; border: 1px solid #2b7ab8; background: #f0f0f0; box-shadow: 0 3px 14px rgba(0, 0, 0, .36); display: flex; flex-direction: column; }
.dlg-title { height: 37px; background: #fff; display: flex; align-items: center; padding: 0 14px 2px 9px; color: #000; }
.dlg-title .logo { width: 20px; height: 20px; }
.dlg-title span { margin-left: 5px; flex: 1; font-size: 16px; }
.dlg-title .x { width: 14px; height: 14px; }
.tabs { height: 34px; padding: 11px 12px 0 11px; display: flex; align-items: flex-end; position: relative; z-index: 1; }
.tab { height: 20px; flex: none; border: 1px solid #d9d9d9; border-left: 0; border-bottom: 0; padding-right: 2px; text-align: center; line-height: 21px; }
.tab.cur { height: 23px; width: 64px; border-left: 1px solid #d9d9d9; background: #fff; line-height: 23px; margin-bottom: -1px; padding-right: 2px; }
.tab.vol { width: 32px; border-right: 0; padding: 0 0 0 14px; text-align: left; }
.scr { width: 18px; height: 21px; flex: none; background: #e1e1e1; border: 1px solid #adadad; display: grid; place-items: center; margin-bottom: 1px; }
.scr.off { background: #ccc; border-color: #ccc; }
.gap { width: 3px; flex: none; display: flex; justify-content: flex-end; line-height: 21px; }
.scr i { border: 5px solid transparent; }
.scr .l { border-right: 6px solid #9c9c9c; border-left: 0; }
.scr .r { border-left: 6px solid #000; border-right: 0; }
.page { margin-left: 11px; width: 685px; height: 222px; background: #fff; border: 1px solid #d9d9d9; padding: 11px 0 0 12px; }
.table { width: 659px; height: 161px; border: 1px solid #828790; display: grid; grid-template: 139px 20px / 636px 21px; background: #f0f0f0; color: #000; }
.grid { overflow: hidden; background: #fff; display: grid; grid-template-columns: 73px 136px 73px 52px 52px 94px 51px 105px; grid-template-rows: 48px; grid-auto-rows: 20px; }
.th { color: #fff; display: flex; flex-direction: column; align-items: center; justify-content: center; border-right: 1px solid #fff; line-height: 20px; }
.blue { background: #3a5795; } .green { background: #1f7419; } .orange { background: #c2490b; }
.td { border-right: 1px solid #d8d8d8; border-bottom: 1px solid #d8d8d8; padding-left: 3px; line-height: 17px; letter-spacing: -.1px; }
.td.dim { color: #808080; } .td.semi { color: #333; }
.td.focus { outline: 1px dotted #000; outline-offset: -1px; }
.chk { padding: 1px 0 0 6px; }
.col { padding: 2px 1px 1px 1px; }
.col i { display: block; height: 16px; border: 1px solid #666; background: repeating-conic-gradient(#666 0 25%, #c8c8c8 0 50%) 0 0 / 2px 2px; }
.vs { display: flex; flex-direction: column; align-items: center; justify-content: space-between; padding: 6px 0 7px 1px; }
.vs svg { width: 12px; height: 8px; } .vs i { width: 19px; height: 54px; background: #cdcdcd; margin: 7px 0 auto; }
.vs svg, .hs svg { fill: none; stroke: #505050; stroke-width: 2; }
.hs { grid-column: 1; display: flex; align-items: center; padding: 0 6px; justify-content: space-between; }
.hs svg { width: 8px; height: 12px; } .hs i { width: 475px; height: 19px; background: #cdcdcd; margin: 0 auto 0 7px; }
.criteria { display: flex; align-items: center; margin-top: 8px; height: 26px; }
.criteria span { width: 159px; padding-top: 3px; }
.criteria i { width: 200px; height: 21px; border: 1px solid #7a7a7a; background: #fff; margin-bottom: 1px; }
.criteria .btn, .actions .btn { width: 91px; height: 26px; margin-left: 9px; padding-right: 2px; padding-top: 3px; }
.criteria i + .btn { margin-left: 8px; }
.actions { margin-top: 31px; display: flex; justify-content: flex-end; padding-right: 12px; }
.actions .def { border: 2px solid #0078d7; }
.cursor { position: absolute; left: 21px; top: 85px; width: 16px; height: 24px; z-index: 2; }
</style>
